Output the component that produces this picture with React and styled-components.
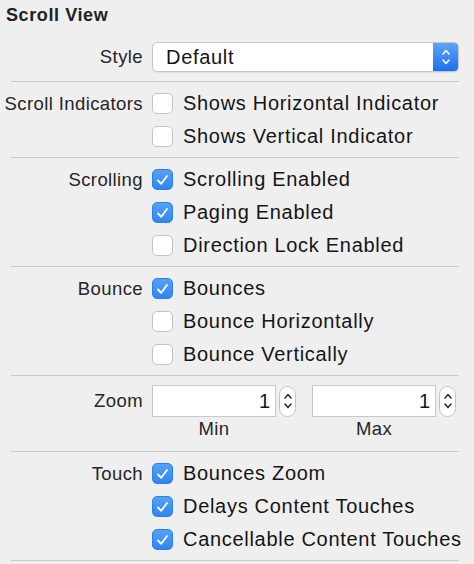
import React from "react";
import styled, { createGlobalStyle } from "styled-components";

const Global = createGlobalStyle`
  html, body {
    margin: 0;
    padding: 0;
    background: #efefef;
  }
  body {
    font-family: "Liberation Sans", Arial, sans-serif;
    color: #151515;
  }
`;

const Panel = styled.div`
  width: 474px;
  height: 564px;
  overflow: hidden;
  background: #efefef;
`;

const Title = styled.div`
  height: 30px;
  line-height: 30px;
  padding-left: 6px;
  font-size: 18px;
  font-weight: bold;
  letter-spacing: 0.6px;
  color: #222;
`;

const Divider = styled.div`
  height: 1px;
  margin: 0 15px 0 11px;
  background: #c9c9c9;
`;

const Section = styled.div`
  display: flex;
  align-items: flex-start;
  padding: ${p => p.$pad || "5px 0 4px"};
`;

const Label = styled.div`
  width: 143px;
  flex: none;
  text-align: right;
  font-size: 18.5px;
  letter-spacing: 0.4px;
  color: #262626;
  height: ${p => p.$h || 33}px;
  line-height: ${p => p.$h || 33}px;
  white-space: nowrap;
`;

const Controls = styled.div`
  margin-left: 9px;
  display: flex;
  flex-direction: column;
`;

const Row = styled.label`
  display: flex;
  align-items: center;
  height: 33px;
  gap: 10px;
  font-size: 20px;
  letter-spacing: 0.7px;
  white-space: nowrap;
`;

const Box = styled.span`
  width: 21px;
  height: 21px;
  box-sizing: border-box;
  border-radius: 5px;
  flex: none;
  display: flex;
  align-items: center;
  justify-content: center;
  background: ${p => (p.$checked ? "linear-gradient(#55a1f6, #2f86ef)" : "#fff")};
  border: 1px solid ${p => (p.$checked ? "#2f80e6" : "#c2c2c2")};
`;

const Popup = styled.div`
  width: 307px;
  height: 30px;
  box-sizing: border-box;
  display: flex;
  background: #fff;
  border: 1px solid #c6c6c6;
  border-radius: 5px;
  overflow: hidden;
  box-shadow: 0 1px 1px rgba(0, 0, 0, 0.06);
`;

const PopupText = styled.div`
  flex: 1;
  padding-left: 13px;
  font-size: 20px;
  letter-spacing: 0.7px;
  line-height: 28px;
`;

const PopupArrows = styled.div`
  width: 25px;
  flex: none;
  display: flex;
  align-items: center;
  justify-content: center;
  background: linear-gradient(#5da4f8, #1b70ef);
`;

const ZoomRow = styled.div`
  display: flex;
  gap: 16px;
`;

const FieldGroup = styled.div`
  display: flex;
  flex-direction: column;
`;

const FieldLine = styled.div`
  display: flex;
  align-items: center;
  gap: 3px;
`;

const NumberField = styled.div`
  width: 124px;
  height: 32px;
  box-sizing: border-box;
  background: #fff;
  border: 1px solid #c8c8c8;
  text-align: right;
  padding-right: 5px;
  font-size: 20px;
  line-height: 30px;
`;

const Stepper = styled.div`
  width: 17px;
  height: 31px;
  box-sizing: border-box;
  border: 1px solid #c4c4c4;
  border-radius: 9px;
  background: #fff;
  display: flex;
  align-items: center;
  justify-content: center;
`;

const SubLabel = styled.div`
  width: 124px;
  margin-top: 1px;
  text-align: center;
  font-size: 18.5px;
  letter-spacing: 0.4px;
  line-height: 22px;
  color: #262626;
`;

const Check = () => (
  <svg width="13" height="12" viewBox="0 0 13 12">
    <path d="M2 6.5 L5.2 9.8 L11 2" fill="none" stroke="#fff" strokeWidth="1.8" strokeLinecap="round" strokeLinejoin="round" />
  </svg>
);

const Chevrons = ({ color, w = 10 }) => (
  <svg width={w} height="20" viewBox="0 0 10 20">
    <path d="M2 7 L5 3.5 L8 7" fill="none" stroke={color} strokeWidth="1.6" strokeLinecap="round" strokeLinejoin="round" />
    <path d="M2 13 L5 16.5 L8 13" fill="none" stroke={color} strokeWidth="1.6" strokeLinecap="round" strokeLinejoin="round" />
  </svg>
);

const CheckRow = ({ checked, children }) => (
  <Row>
    <Box $checked={checked}>{checked && <Check />}</Box>
    <span>{children}</span>
  </Row>
);

const groups = [
  {
    label: "Scroll Indicators",
    items: [
      ["Shows Horizontal Indicator", false],
      ["Shows Vertical Indicator", false]
    ]
  },
  {
    label: "Scrolling",
    items: [
      ["Scrolling Enabled", true],
      ["Paging Enabled", true],
      ["Direction Lock Enabled", false]
    ]
  },
  {
    label: "Bounce",
    items: [
      ["Bounces", true],
      ["Bounce Horizontally", false],
      ["Bounce Vertically", false]
    ]
  }
];

const Field = ({ value, label }) => (
  <FieldGroup>
    <FieldLine>
      <NumberField>{value}</NumberField>
      <Stepper>
        <Chevrons color="#333" w={10} />
      </Stepper>
    </FieldLine>
    <SubLabel>{label}</SubLabel>
  </FieldGroup>
);

export default function App() {
  return (
    <Panel>
      <Global />
      <Title>Scroll View</Title>
      <Section $pad="12px 0 9px">
        <Label $h={30}>Style</Label>
        <Controls>
          <Popup>
            <PopupText>Default</PopupText>
            <PopupArrows>
              <Chevrons color="#fff" />
            </PopupArrows>
          </Popup>
        </Controls>
      </Section>
      {groups.map(g => (
        <React.Fragment key={g.label}>
          <Divider />
          <Section>
            <Label>{g.label}</Label>
            <Controls>
              {g.items.map(([text, on]) => (
                <CheckRow key={text} checked={on}>
                  {text}
                </CheckRow>
              ))}
            </Controls>
          </Section>
        </React.Fragment>
      ))}
      <Divider />
      <Section $pad="9px 0 11px">
        <Label $h={32}>Zoom</Label>
        <Controls>
          <ZoomRow>
            <Field value="1" label="Min" />
            <Field value="1" label="Max" />
          </ZoomRow>
        </Controls>
      </Section>
      <Divider />
      <Section>
        <Label>Touch</Label>
        <Controls>
          <CheckRow checked>Bounces Zoom</CheckRow>
          <CheckRow checked>Delays Content Touches</CheckRow>
          <CheckRow checked>Cancellable Content Touches</CheckRow>
        </Controls>
      </Section>
      <Divider />
    </Panel>
  );
}
